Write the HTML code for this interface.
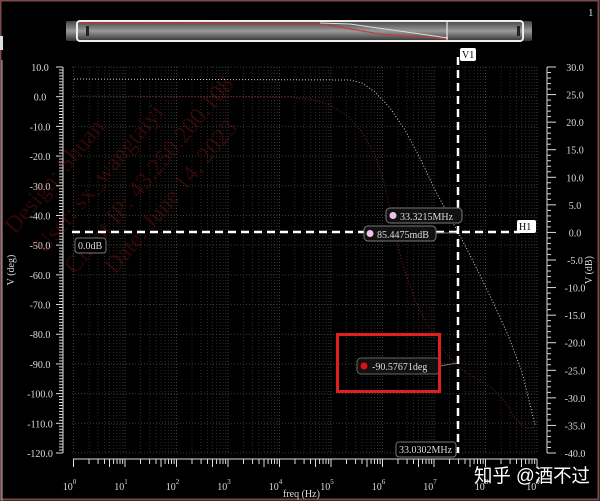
<!DOCTYPE html><html><head><meta charset="utf-8"><style>
html,body{margin:0;padding:0;background:#000;width:600px;height:501px;overflow:hidden}
svg{display:block}
text{font-family:"Liberation Serif",serif;fill:#ddd}
</style></head><body>
<svg id="s" width="600" height="501" viewBox="0 0 600 501" xmlns="http://www.w3.org/2000/svg">
<rect x="0" y="0" width="600" height="501" fill="#000"/>
<rect x="0.5" y="0.5" width="598" height="499" fill="none" stroke="#7a4a4a" stroke-width="2"/>
<rect x="0" y="36" width="3" height="14" fill="#ddd"/>
<line x1="2" y1="60" x2="2" y2="501" stroke="#aaa" stroke-width="1"/>
<text x="588" y="16" font-size="11">1</text>
<defs><linearGradient id="g" x1="0" y1="0" x2="0" y2="1"><stop offset="0" stop-color="#444"/><stop offset="0.5" stop-color="#9a9a9a"/><stop offset="1" stop-color="#333"/></linearGradient></defs>
<rect x="66" y="21" width="466" height="20" fill="url(#g)" rx="2"/>
<rect x="77" y="21" width="446" height="20" fill="url(#g)" stroke="#eee" stroke-width="2" rx="3"/>
<polyline points="80,23 320,24 345,28 380,34 448,39" fill="none" stroke="#c33" stroke-width="1"/>
<polyline points="320,23 350,24 448,38" fill="none" stroke="#ddd" stroke-width="1"/>
<line x1="447" y1="22" x2="447" y2="41" stroke="#fff"/>
<rect x="86" y="26" width="3" height="10" fill="#222"/><rect x="517" y="26" width="3" height="10" fill="#222"/>
<g id="grid"></g>
<g id="ax"></g>
<g font-size="24" opacity="0.35" font-family="Liberation Sans,sans-serif">
<text transform="translate(15,235) rotate(-50)" style="fill:#8a1414">Design: Shuan</text>
<text transform="translate(45,255) rotate(-50)" style="fill:#8a1414">User: sx_wangtaiyi</text>
<text transform="translate(75,275) rotate(-50)" style="fill:#8a1414">Client IP: 43.250.200.108</text>
<text transform="translate(115,275) rotate(-50)" style="fill:#8a1414">Date: June 14, 2023</text>
</g>
<polyline points="74,79 350,80 362,83 375,92 390,108 405,130 420,158 435,190 458,232 475,265 492,300 508,335 522,372 535,425" fill="none" stroke="#ccc" stroke-width="1" stroke-dasharray="1 2"/>
<polyline points="74,96 290,97 310,99 330,105 348,116 362,132 375,155 385,185 393,225 402,262 415,300 430,330 445,352 458,367 475,378 492,388 505,402 515,418 525,428 533,428 537,422" fill="none" stroke="#7a2020" stroke-width="1" stroke-dasharray="1 2"/>
<line x1="458" y1="57" x2="458" y2="453" stroke="#fff" stroke-width="2.5" stroke-dasharray="8 5"/>
<line x1="72" y1="232" x2="520" y2="232" stroke="#fff" stroke-width="2.5" stroke-dasharray="8 5"/>
<rect x="460" y="48" width="16" height="13" rx="2" fill="#fff"/><text x="462" y="58" font-size="10" style="fill:#000">V1</text>
<rect x="517" y="220" width="19" height="13" rx="2" fill="#fff"/><text x="519" y="230" font-size="10" style="fill:#000">H1</text>
<rect x="75" y="238" width="31" height="15" rx="3" fill="#000" stroke="#777"/><text x="78" y="249" font-size="10">0.0dB</text>
<rect x="386" y="208" width="76" height="15" rx="4" fill="#111" stroke="#777"/><circle cx="393" cy="215.5" r="3.5" fill="#f0c0f0"/><text x="400" y="220" font-size="10">33.3215MHz</text>
<rect x="364" y="226" width="72" height="15" rx="4" fill="#111" stroke="#777"/><circle cx="370" cy="233.5" r="3.5" fill="#f0c0f0"/><text x="377" y="238" font-size="10">85.4475mdB</text>
<line x1="436" y1="233" x2="456" y2="233" stroke="#777"/>
<rect x="357" y="358" width="83" height="16" rx="4" fill="#111" stroke="#666"/><circle cx="364" cy="366" r="3.5" fill="#e01010"/><text x="372" y="370" font-size="10">-90.57671deg</text>
<line x1="440" y1="366" x2="457" y2="363" stroke="#777"/>
<rect x="337.5" y="334.5" width="102" height="57" fill="none" stroke="#e02020" stroke-width="3"/>
<rect x="396" y="442" width="60" height="15" rx="3" fill="#000" stroke="#777"/><text x="399" y="453" font-size="10">33.0302MHz</text>
<text x="14" y="270" font-size="10" text-anchor="middle" transform="rotate(-90 14 270)">V (deg)</text>
<text x="592" y="270" font-size="10" text-anchor="middle" transform="rotate(-90 592 270)">V (dB)</text>
<text x="283" y="497" font-size="10">freq (Hz)</text>
<text x="474" y="482" font-size="19" textLength="116" lengthAdjust="spacingAndGlyphs" style="fill:#fff;font-family:'Liberation Sans','Noto Sans CJK SC',sans-serif">知乎 @酒不过</text>
</svg>
<script>
(function(){
var ns="http://www.w3.org/2000/svg",g=document.getElementById('grid'),a=document.getElementById('ax');
function L(p,x1,y1,x2,y2,c,d,w){var l=document.createElementNS(ns,'line');l.setAttribute('x1',x1);l.setAttribute('y1',y1);l.setAttribute('x2',x2);l.setAttribute('y2',y2);l.setAttribute('stroke',c);l.setAttribute('stroke-width',w||1);if(d)l.setAttribute('stroke-dasharray',d);p.appendChild(l);}
function T(x,y,s,sz,anc){var t=document.createElementNS(ns,'text');t.setAttribute('x',x);t.setAttribute('y',y);t.setAttribute('font-size',sz||10);if(anc)t.setAttribute('text-anchor',anc);t.innerHTML=s;a.appendChild(t);}
var x0=73.5,dec=51.5,py0=67,py1=453;
for(var d=0;d<9;d++){for(var m=1;m<10;m++){var x=x0+dec*(d+Math.log10(m));L(g,x,py0,x,py1,m==1?'#444':'#2c2c2c','1 2');L(a,x,459,x,m==1||m==5?467:464,'#ddd');}}
L(g,537,py0,537,py1,'#444','1 2');L(a,537,459,537,467,'#ddd');
var st=(py1-py0)/13;
for(var i=0;i<=13;i++){var y=py0+i*st;L(g,72,y,537,y,'#3a3a3a','1 2');T(40,y+4,(10-10*i).toFixed(1),10,'middle');
 for(var k=0;k<10;k++){var yy=y+k*st/10;if(yy>py1)break;L(a,k==0?56:59,yy,63,yy,'#ddd');}}
var st2=(py1-py0)/14;
for(var i=0;i<=14;i++){var y=py0+i*st2;T(575,y+4,(30-5*i).toFixed(1),10,'middle');
 for(var k=0;k<5;k++){var yy=y+k*st2/5;if(yy>py1)break;L(a,547,yy,k==0?556:551,yy,'#ddd');}}
L(a,63,py0,63,py1,'#ddd');L(a,547,py0,547,py1,'#ddd');L(a,73,459,537,459,'#ddd');
for(var d=0;d<=9;d++){T(x0+dec*d-4,490,'10<tspan dy="-6" font-size="7">'+d+'</tspan>',10,'middle');}
})();
</script>
</body></html>
